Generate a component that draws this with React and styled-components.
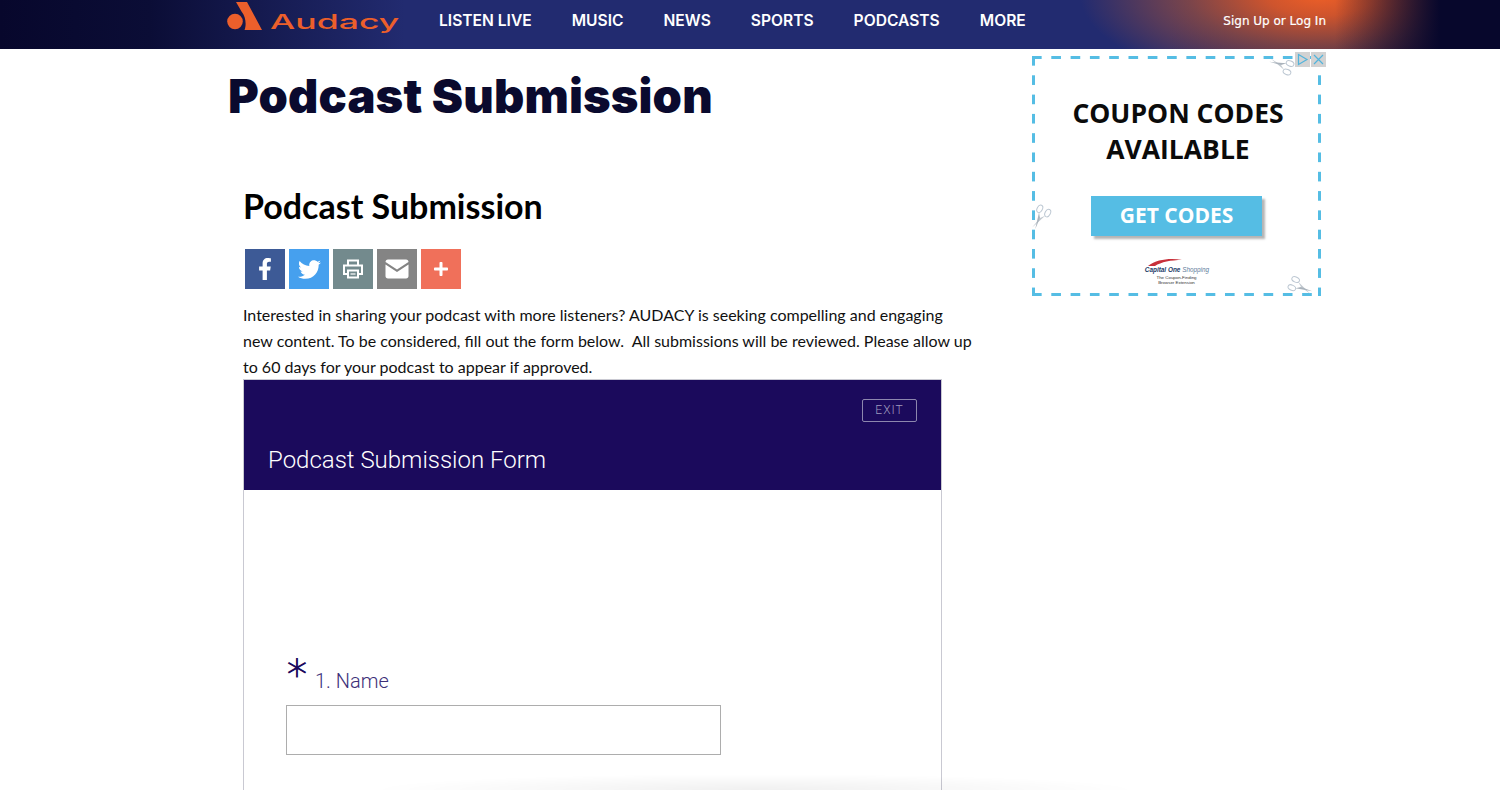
import React from "react";
import styled, { createGlobalStyle } from "styled-components";
import { FaFacebookF, FaTwitter, FaPlus } from "react-icons/fa";

const GlobalStyle = createGlobalStyle`
  html, body {
    margin: 0;
    height: 790px;
    overflow: hidden;
    background: #fff;
    font-family: Lato, "Liberation Sans", sans-serif;
  }
  * { box-sizing: border-box; }
`;

const TopBar = styled.header`
  height: 49px;
  display: flex;
  align-items: center;
  padding: 0 174px 8px 227px;
  color: #fff;
  background:
    linear-gradient(90deg, rgba(7, 7, 44, 0) 89%, #07072c 96%),
    radial-gradient(ellipse 240px 95px at 1320px -5px, #ee5f27 0%, rgba(226, 90, 40, 0.9) 22%, rgba(160, 80, 60, 0.7) 55%, rgba(60, 45, 90, 0) 100%),
    linear-gradient(90deg, #07072c 0%, #0b0d36 10%, #222b70 27%, #222b70 78%, #141a55 90%, #07072c 100%);
`;

const LogoWrap = styled.a`
  display: flex;
  align-items: flex-start;
  align-self: flex-start;
  width: 212px;
  margin-top: 1px;
  color: #ec5f2b;
`;

const LogoText = styled.span`
  font-family: Inter, sans-serif;
  font-size: 20px;
  font-weight: 500;
  line-height: 28px;
  margin: 7px 0 0 7px;
  transform: scaleX(1.78);
  transform-origin: left center;
`;

const Nav = styled.nav`
  display: flex;
  gap: 40px;
  flex: 1;
`;

const NavLink = styled.a`
  font-family: Inter, "Liberation Sans", sans-serif;
  font-size: 15.6px;
  font-weight: 600;
`;

const SignIn = styled.a`
  font-family: "DejaVu Sans", sans-serif;
  font-size: 12px;
  -webkit-text-stroke: 0.2px #fff;
`;

const Columns = styled.div`
  display: grid;
  grid-template-columns: 800px 300px;
  padding-left: 228px;
`;

const Main = styled.main`
  min-width: 0;
`;

const PageTitle = styled.h1`
  margin: 18px 0 0;
  font-family: Inter, sans-serif;
  font-size: 47px;
  line-height: 58px;
  font-weight: 900;
  letter-spacing: 0.15px;
  color: #0a0a2e;
`;

const Article = styled.article`
  padding: 61px 0 0 15px;
`;

const ArticleTitle = styled.h2`
  margin: 0;
  font-family: Lato, sans-serif;
  font-size: 34px;
  line-height: 40px;
  font-weight: 700;
  color: #000;
`;

const ShareRow = styled.div`
  display: flex;
  gap: 4px;
  margin: 23px 0 0 2px;
`;

const ShareButton = styled.a`
  width: 40px;
  height: 40px;
  display: flex;
  align-items: center;
  justify-content: center;
  color: #fff;
  background: ${(props) => props.$bg};
  font-size: ${(props) => props.$size}px;
`;

const Intro = styled.p`
  width: 730px;
  margin: 13px 0 0;
  font-size: 16px;
  line-height: 26px;
  color: #111;
`;

const FormCard = styled.section`
  width: 699px;
  height: 440px;
  margin-top: -1px;
  border: 1px solid #c9c9d2;
  border-bottom: 0;
`;

const FormHeader = styled.div`
  height: 110px;
  background: #1b0a5c;
  padding: 19px 24px 0;
  display: flex;
  flex-direction: column;
`;

const ExitButton = styled.a`
  align-self: flex-end;
  width: 55px;
  height: 23px;
  border: 1px solid #8d87ae;
  border-radius: 2px;
  color: #a09abf;
  font-family: Roboto, sans-serif;
  font-weight: 300;
  font-size: 12px;
  letter-spacing: 1px;
  line-height: 21px;
  text-align: center;
`;

const FormTitle = styled.div`
  margin-top: 23px;
  font-family: Roboto, sans-serif;
  font-weight: 300;
  font-size: 24px;
  line-height: 30px;
  color: #fff;
`;

const Question = styled.div`
  padding: 160px 0 0 42px;
`;

const QuestionLabel = styled.label`
  display: flex;
  align-items: flex-start;
  height: 55px;
  padding-left: 1px;
  color: #3d2f78;
  font-family: Roboto, sans-serif;
  font-weight: 300;
  font-size: 20px;
`;

const Required = styled.span`
  margin-top: 3px;
  width: 28px;
  font-family: "DejaVu Sans", sans-serif;
  font-size: 40px;
  line-height: 44px;
  color: #1b0a5c;
  -webkit-text-stroke: 0.9px #1b0a5c;
`;

const LabelText = styled.span`
  margin-top: 18px;
  line-height: 26px;
`;

const TextBox = styled.input`
  display: block;
  width: 435px;
  height: 50px;
  border: 1px solid #adadad;
  background: #fff;
  outline: none;
`;

const Coupon = styled.aside`
  position: relative;
  width: 289px;
  height: 240px;
  margin: 7px 0 0 4px;
  padding-top: 39px;
  text-align: center;
  font-family: "Open Sans", sans-serif;
  background:
    linear-gradient(90deg, #55bde4 50%, transparent 50%) top left / 19.3px 3px repeat-x,
    linear-gradient(90deg, #55bde4 50%, transparent 50%) bottom left / 19.3px 3px repeat-x,
    linear-gradient(180deg, #55bde4 50%, transparent 50%) top left / 3px 19.3px repeat-y,
    linear-gradient(180deg, #55bde4 50%, transparent 50%) top right / 3px 19.3px repeat-y;
`;

const CouponHeading = styled.div`
  padding-left: 3px;
  font-size: 26.5px;
  line-height: 36px;
  font-weight: 700;
  color: #0b0b0b;
`;

const CouponButton = styled.div`
  width: 171px;
  height: 40px;
  margin: 29px 0 0 59px;
  background: #55bde4;
  color: #fff;
  font-size: 21px;
  font-weight: 700;
  line-height: 38px;
  box-shadow: 3px 3px 2px rgba(120, 120, 120, 0.55);
`;

const Sponsor = styled.div`
  position: relative;
  margin: 29px 0 0 1px;
  font-family: "Liberation Sans", sans-serif;
  font-size: 6.4px;
  font-style: italic;
  font-weight: 700;
  line-height: 9px;
  color: #1a3a66;
  white-space: nowrap;
`;

const SponsorSoft = styled.span`
  font-weight: 400;
  color: #5f7d9c;
`;

const Swoosh = styled.svg`
  position: absolute;
  left: 114px;
  top: -7px;
`;

const SponsorNote = styled.div`
  margin-top: 1px;
  font-family: "Liberation Sans", sans-serif;
  font-size: 4.4px;
  line-height: 5px;
  color: #333;
`;

const SnipIcon = styled.svg`
  position: absolute;
  left: ${(props) => props.$x}px;
  top: ${(props) => props.$y}px;
  transform: rotate(${(props) => props.$turn}deg);
`;

const AdControls = styled.div`
  position: absolute;
  top: -4px;
  right: -5px;
  display: flex;
  gap: 1px;
`;

const AdControl = styled.span`
  width: 15px;
  height: 15px;
  display: flex;
  align-items: center;
  justify-content: center;
  background: #d2d2d2;
`;

const BottomFade = styled.div`
  position: fixed;
  left: 370px;
  bottom: 0;
  width: 770px;
  height: 16px;
  background: radial-gradient(ellipse 50% 100% at 50% 100%, rgba(0, 0, 0, 0.06), rgba(0, 0, 0, 0));
  pointer-events: none;
`;

const LogoMark = () => (
  <svg width="36" height="30" viewBox="0 0 36 30">
    <circle cx="8" cy="20.5" r="7.8" fill="#ec5f2b" />
    <path d="M9 1H20L35 29H17.5C19.5 24 19 16 14.5 10.5Z" fill="#ec5f2b" />
  </svg>
);

const PrintIcon = () => (
  <svg width="22" height="22" viewBox="0 0 22 22" fill="none" stroke="#fff" strokeWidth="2">
    <path d="M6 7V2.5H16V7" />
    <path d="M5.5 16H2V7.5H20V16H16.5" />
    <path d="M6 12.5H16V19.5H6Z" />
    <path d="M8.5 16H13.5" strokeWidth="1.2" />
  </svg>
);

const MailIcon = () => (
  <svg width="24" height="20" viewBox="0 0 24 20">
    <path d="M3 0.5H21C22.6 0.5 23.5 1.5 23.5 3L12 10.5L0.5 3C0.5 1.5 1.4 0.5 3 0.5Z" fill="#fff" />
    <path d="M0.5 5.4L12 13L23.5 5.4V17C23.5 18.6 22.6 19.5 21 19.5H3C1.4 19.5 0.5 18.6 0.5 17Z" fill="#fff" />
  </svg>
);

// nearly closed scissors, blades pointing right before the turn
const Snip = ({ x, y, turn }) => (
  <SnipIcon width="26" height="26" viewBox="0 0 26 26" $x={x} $y={y} $turn={turn}>
    <ellipse cx="5" cy="8.5" rx="4" ry="2.6" fill="none" stroke="#bcc7d2" strokeWidth="1" />
    <ellipse cx="5" cy="17.5" rx="4" ry="2.6" fill="none" stroke="#bcc7d2" strokeWidth="1" />
    <path d="M8.5 9.5L25 15.5L13 13Z" fill="#c2c9d0" />
    <path d="M8.5 16.5L25 12L13 13Z" fill="#aab3bc" />
  </SnipIcon>
);

const AdChoices = () => (
  <svg width="13" height="13" viewBox="0 0 13 13" fill="none" stroke="#52b4dc" strokeWidth="1.2">
    <path d="M2.5 1.5L11 6.5L2.5 11.5Z" />
  </svg>
);

const AdClose = () => (
  <svg width="11" height="11" viewBox="0 0 11 11" stroke="#52b4dc" strokeWidth="1.2">
    <path d="M1 1L10 10M10 1L1 10" />
  </svg>
);

const navItems = ["LISTEN LIVE", "MUSIC", "NEWS", "SPORTS", "PODCASTS", "MORE"];

export default function App() {
  return (
    <>
      <GlobalStyle />
      <TopBar>
        <LogoWrap>
          <LogoMark />
          <LogoText>Audacy</LogoText>
        </LogoWrap>
        <Nav>
          {navItems.map((item) => (
            <NavLink key={item}>{item}</NavLink>
          ))}
        </Nav>
        <SignIn>Sign Up or Log In</SignIn>
      </TopBar>
      <Columns>
        <Main>
          <PageTitle>Podcast Submission</PageTitle>
          <Article>
            <ArticleTitle>Podcast Submission</ArticleTitle>
            <ShareRow>
              <ShareButton $bg="#3d5a96" $size={22}><FaFacebookF /></ShareButton>
              <ShareButton $bg="#46a0ee" $size={23}><FaTwitter /></ShareButton>
              <ShareButton $bg="#738a8d" $size={20}><PrintIcon /></ShareButton>
              <ShareButton $bg="#848484" $size={24}><MailIcon /></ShareButton>
              <ShareButton $bg="#f0705a" $size={16}><FaPlus /></ShareButton>
            </ShareRow>
            <Intro>
              Interested in sharing your podcast with more listeners? AUDACY is seeking compelling and engaging
              new content. To be considered, fill out the form below.&nbsp; All submissions will be reviewed. Please
              allow up to 60 days for your podcast to appear if approved.
            </Intro>
            <FormCard>
              <FormHeader>
                <ExitButton>EXIT</ExitButton>
                <FormTitle>Podcast Submission Form</FormTitle>
              </FormHeader>
              <Question>
                <QuestionLabel>
                  <Required>*</Required>
                  <LabelText>1. Name</LabelText>
                </QuestionLabel>
                <TextBox type="text" />
              </Question>
            </FormCard>
          </Article>
        </Main>
        <Coupon>
          <CouponHeading>COUPON CODES<br />AVAILABLE</CouponHeading>
          <CouponButton>GET CODES</CouponButton>
          <Sponsor>
            <Swoosh width="36" height="9" viewBox="0 0 36 9">
              <path d="M1 8C10 1 24 0 35 2C24 2 14 4 8 8Z" fill="#c8303a" />
            </Swoosh>
            Capital One <SponsorSoft>Shopping</SponsorSoft>
          </Sponsor>
          <SponsorNote>The Coupon-Finding<br />Browser Extension</SponsorNote>
          <Snip x={236} y={-4} turn={200} />
          <Snip x={-5} y={149} turn={118} />
          <Snip x={256} y={218} turn={25} />
          <AdControls>
            <AdControl><AdChoices /></AdControl>
            <AdControl><AdClose /></AdControl>
          </AdControls>
        </Coupon>
      </Columns>
      <BottomFade />
    </>
  );
}
